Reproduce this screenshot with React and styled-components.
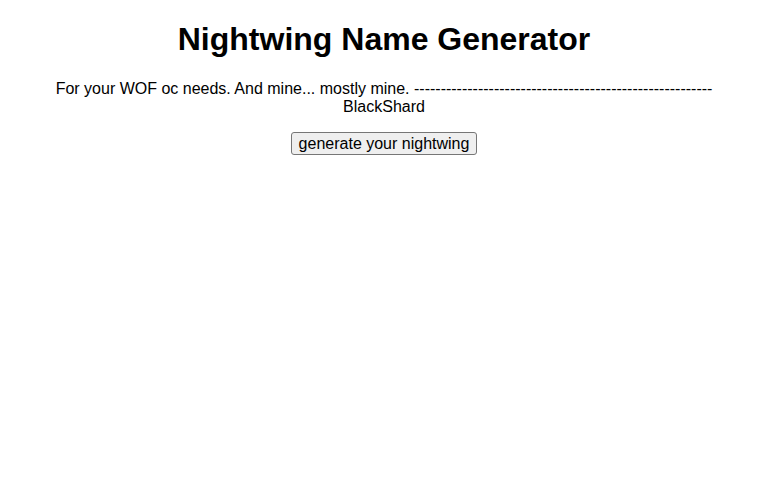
import React, { useState } from 'react';
import styled, { createGlobalStyle } from 'styled-components';

const GlobalStyle = createGlobalStyle`
  body {
    margin: 0;
    background: #fff;
    color: #000;
    font-family: "Liberation Sans", Arial, sans-serif;
  }
`;

const Page = styled.div`
  text-align: center;
`;

const Title = styled.h1`
  font-size: 32px;
  font-weight: bold;
  margin: 21.44px 0;
`;

const Blurb = styled.p`
  font-size: 16px;
  margin: 16px 48px;
`;

const Actions = styled.div`
  margin: 16px 0;
`;

const Button = styled.button`
  font-family: "Liberation Sans", Arial, sans-serif;
  font-size: 16px;
  color: #000;
  background: #efefef;
  border: 1px solid #767676;
  border-radius: 3px;
  padding: 2px 7px 1px;
  cursor: pointer;
`;

const Result = styled.div`
  font-size: 16px;
  min-height: 18px;
`;

const names = ['Moonwatcher', 'Starflight', 'Fatespeaker', 'Mightyclaws', 'Darkstalker'];

export default function App() {
  const [name, setName] = useState('');
  return (
    <Page>
      <GlobalStyle />
      <Title>Nightwing Name Generator</Title>
      <Blurb>
        For your WOF oc needs. And mine... mostly mine. {'-'.repeat(56)} BlackShard
      </Blurb>
      <Actions>
        <Button onClick={() => setName(names[Math.floor(Math.random() * names.length)])}>
          generate your nightwing
        </Button>
      </Actions>
      <Result>{name}</Result>
    </Page>
  );
}
